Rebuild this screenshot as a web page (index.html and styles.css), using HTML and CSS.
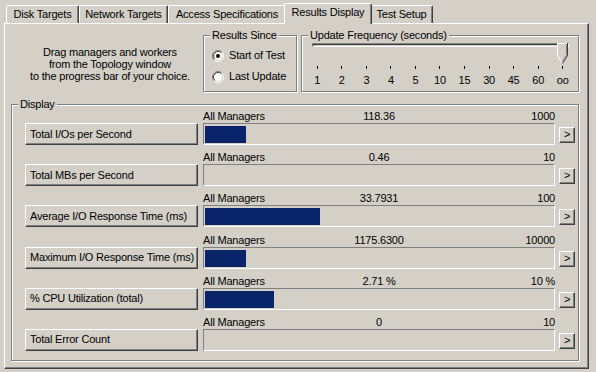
FILE: index.html
```html
<!DOCTYPE html>
<html>
<head>
<meta charset="utf-8">
<title>Results Display</title>
<link rel="stylesheet" href="styles.css">
</head>
<body>
<div class="window">
  <div class="tabs">
    <div class="tab tab-disk">Disk Targets</div>
    <div class="tab tab-net">Network Targets</div>
    <div class="tab tab-access">Access Specifications</div>
    <div class="tab tab-results selected">Results Display</div>
    <div class="tab tab-setup">Test Setup</div>
  </div>
  <div class="page">
    <div class="top">
      <p class="hint">Drag managers and workers<br>from the Topology window<br>to the progress bar of your choice.</p>
      <div class="group since">
        <span class="group-title">Results Since</span>
        <div class="radios">
          <div class="radio">
            <svg class="radio-icon" viewBox="0 0 12 12" width="12" height="12">
              <circle cx="6" cy="6" r="5" fill="#fff"/>
              <path d="M2.11 9.89A5.5 5.5 0 0 1 9.89 2.11" fill="none" stroke="#808080"/>
              <path d="M9.89 2.11A5.5 5.5 0 0 1 2.11 9.89" fill="none" stroke="#fff"/>
              <path d="M2.82 9.18A4.5 4.5 0 0 1 9.18 2.82" fill="none" stroke="#404040"/>
              <path d="M9.18 2.82A4.5 4.5 0 0 1 2.82 9.18" fill="none" stroke="#d4d0c8"/>
              <circle cx="6" cy="6" r="2" fill="#000"/>
            </svg>
            <span>Start of Test</span>
          </div>
          <div class="radio">
            <svg class="radio-icon" viewBox="0 0 12 12" width="12" height="12">
              <circle cx="6" cy="6" r="5" fill="#fff"/>
              <path d="M2.11 9.89A5.5 5.5 0 0 1 9.89 2.11" fill="none" stroke="#808080"/>
              <path d="M9.89 2.11A5.5 5.5 0 0 1 2.11 9.89" fill="none" stroke="#fff"/>
              <path d="M2.82 9.18A4.5 4.5 0 0 1 9.18 2.82" fill="none" stroke="#404040"/>
              <path d="M9.18 2.82A4.5 4.5 0 0 1 2.82 9.18" fill="none" stroke="#d4d0c8"/>
            </svg>
            <span>Last Update</span>
          </div>
        </div>
      </div>
      <div class="group freq">
        <span class="group-title">Update Frequency (seconds)</span>
        <div class="slider">
          <div class="track"></div>
          <svg class="thumb" viewBox="0 0 11 21" width="11" height="21">
            <path d="M0 0H11V12.5L5.5 21L0 12.5Z" fill="#d4d0c8"/>
            <path d="M0.5 12.5V0.5H10" fill="none" stroke="#fff"/>
            <path d="M0.5 12.5L5.3 20" fill="none" stroke="#fff"/>
            <path d="M10.5 0V12.5L5.5 20.5" fill="none" stroke="#404040"/>
            <path d="M9.5 1V12.3L5.4 18.8" fill="none" stroke="#808080"/>
          </svg>
        </div>
        <div class="ticks">
          <span></span><span></span><span></span><span></span><span></span><span></span><span></span><span></span><span></span><span></span><span></span>
        </div>
        <div class="scale">
          <span>1</span><span>2</span><span>3</span><span>4</span><span>5</span><span>10</span><span>15</span><span>30</span><span>45</span><span>60</span><span>oo</span>
        </div>
      </div>
    </div>
    <div class="group display">
      <span class="group-title">Display</span>
      <div class="metrics">
        <div class="metric">
          <div class="meta"><span>All Managers</span><span class="value">118.36</span><span class="max">1000</span></div>
          <div class="btn metric-btn">Total I/Os per Second</div>
          <div class="bar"><div class="fill" style="width:41px"></div></div>
          <div class="btn arrow">&gt;</div>
        </div>
        <div class="metric">
          <div class="meta"><span>All Managers</span><span class="value">0.46</span><span class="max">10</span></div>
          <div class="btn metric-btn">Total MBs per Second</div>
          <div class="bar"><div class="fill" style="width:0px"></div></div>
          <div class="btn arrow">&gt;</div>
        </div>
        <div class="metric">
          <div class="meta"><span>All Managers</span><span class="value">33.7931</span><span class="max">100</span></div>
          <div class="btn metric-btn">Average I/O Response Time (ms)</div>
          <div class="bar"><div class="fill" style="width:115px"></div></div>
          <div class="btn arrow">&gt;</div>
        </div>
        <div class="metric">
          <div class="meta"><span>All Managers</span><span class="value">1175.6300</span><span class="max">10000</span></div>
          <div class="btn metric-btn">Maximum I/O Response Time (ms)</div>
          <div class="bar"><div class="fill" style="width:41px"></div></div>
          <div class="btn arrow">&gt;</div>
        </div>
        <div class="metric">
          <div class="meta"><span>All Managers</span><span class="value">2.71 %</span><span class="max">10 %</span></div>
          <div class="btn metric-btn">% CPU Utilization (total)</div>
          <div class="bar"><div class="fill" style="width:69px"></div></div>
          <div class="btn arrow">&gt;</div>
        </div>
        <div class="metric">
          <div class="meta"><span>All Managers</span><span class="value">0</span><span class="max">10</span></div>
          <div class="btn metric-btn">Total Error Count</div>
          <div class="bar"><div class="fill" style="width:0px"></div></div>
          <div class="btn arrow">&gt;</div>
        </div>
      </div>
    </div>
  </div>
</div>
</body>
</html>
```

FILE: styles.css
```css
* {
  box-sizing: border-box;
}

html,
body {
  margin: 0;
  padding: 0;
}

body {
  background: #d4d0c8;
  font-family: "Liberation Sans", Arial, sans-serif;
  font-size: 11px;
  line-height: 13px;
  letter-spacing: -0.2px;
  color: #000;
}

.window {
  width: 596px;
  height: 372px;
  overflow: hidden;
}

/* ---------- tabs ---------- */
.tabs {
  display: flex;
  align-items: flex-end;
  height: 23px;
  padding-left: 6px;
}

.tab {
  height: 18px;
  padding-top: 2px;
  text-align: center;
  white-space: nowrap;
  background: #d4d0c8;
  border: 1px solid;
  border-bottom: 0;
  border-color: #fff #404040 #fff #fff;
  border-radius: 2px 2px 0 0;
  box-shadow: inset -1px 0 #808080;
}

.tab-disk { width: 73px; }
.tab-net { width: 89px; }
.tab-access { width: 118px; }
.tab-results { width: 84px; }
.tab-setup { width: 63px; }

.tab.selected {
  position: relative;
  z-index: 1;
  width: 88px;
  height: 21px;
  margin: 0 -2px -1px;
}

/* ---------- page ---------- */
.page {
  margin-left: 4px;
  width: 585px;
  height: 346px;
  padding-top: 11px;
  border: 1px solid;
  border-color: #fff #404040 #404040 #fff;
  box-shadow: inset -1px -1px #808080;
}

.top {
  display: flex;
  align-items: flex-start;
  height: 57px;
}

.hint {
  width: 198px;
  margin: 11px 0 0;
  padding-left: 12px;
  line-height: 12px;
  text-align: center;
}

/* ---------- group boxes ---------- */
.group {
  position: relative;
  border: 1px solid #808080;
  box-shadow: inset 1px 1px #fff, 1px 1px #fff;
}

.group-title {
  position: absolute;
  top: -7px;
  left: 6px;
  padding: 0 2px;
  background: #d4d0c8;
  line-height: 13px;
  white-space: nowrap;
}

.since {
  width: 94px;
  height: 57px;
}

.radios {
  display: flex;
  flex-direction: column;
  gap: 8px;
  padding: 13px 0 0 8px;
}

.radio {
  display: flex;
  align-items: flex-start;
  gap: 5px;
  height: 13px;
  white-space: nowrap;
}

.radio-icon {
  flex: none;
  margin-top: 1px;
}

.freq {
  width: 278px;
  height: 57px;
  margin-left: 4px;
}

.slider {
  position: relative;
  width: 257px;
  height: 21px;
  margin: 7px 0 0 10px;
}

.track {
  margin-top: 6px;
  height: 4px;
  border: 1px solid;
  border-color: #808080 #fff #fff #808080;
  box-shadow: inset 1px 1px #404040;
}

.thumb {
  position: absolute;
  left: 245px;
  top: 0;
}

.ticks,
.scale {
  display: grid;
  grid-template-columns: repeat(11, 1fr);
  width: 270px;
  margin-left: 3px;
}

.ticks {
  height: 3px;
  margin-top: 2px;
}

.ticks span {
  justify-self: center;
  width: 1px;
  height: 3px;
  background: #000;
}

.scale {
  margin-top: 5px;
  text-align: center;
}

/* ---------- display ---------- */
.display {
  width: 568px;
  height: 257px;
  margin: 12px 0 0 6px;
  padding: 5px 0 0 13px;
}

.metrics {
  display: flex;
  flex-direction: column;
  gap: 6.2px;
}

.metric {
  display: grid;
  grid-template-columns: 173px 5px 352px 4px 16px;
  grid-template-rows: 13px 22px;
}

.meta {
  grid-column: 3;
  grid-row: 1;
  display: grid;
  grid-template-columns: 1fr auto 1fr;
  white-space: nowrap;
}

.meta .max {
  justify-self: end;
}

.btn {
  background: #d4d0c8;
  border: 1px solid;
  border-color: #fff #404040 #404040 #fff;
  box-shadow: inset -1px -1px #808080;
  white-space: nowrap;
}

.metric-btn {
  grid-column: 1;
  grid-row: 2;
  display: flex;
  align-items: center;
  padding-left: 4px;
}

.bar {
  grid-column: 3;
  grid-row: 2;
  padding: 2px 1px 1px;
  border: 1px solid;
  border-color: #808080 #fff #fff #808080;
}

.fill {
  height: 100%;
  background: #0a246a;
}

.arrow {
  grid-column: 5;
  grid-row: 2;
  align-self: start;
  height: 16px;
  margin-top: 4px;
  display: flex;
  align-items: center;
  justify-content: center;
  padding-bottom: 1px;
}
```
